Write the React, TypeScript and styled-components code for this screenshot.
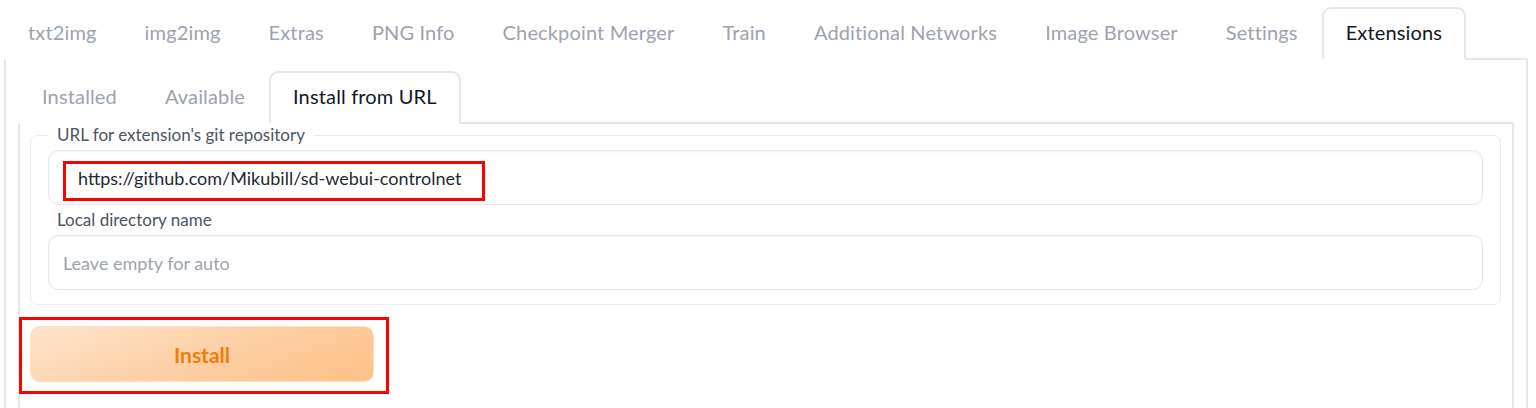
import React from "react";
import styled, { createGlobalStyle } from "styled-components";

const GlobalStyle = createGlobalStyle`
  html, body {
    margin: 0;
    padding: 0;
    background: #ffffff;
  }
  body {
    font-family: "Lato", "Liberation Sans", sans-serif;
    color: #1f2937;
  }
  * { box-sizing: border-box; }
`;

const Page = styled.div`
  width: 1536px;
  height: 408px;
  overflow: hidden;
  padding: 7px 8px 0 4px;
`;

const TabRow = styled.div`
  display: flex;
  align-items: flex-end;
  position: relative;
  z-index: 1;
`;

const Tab = styled.button<{ $active?: boolean }>`
  font-family: "Lato", "Liberation Sans", sans-serif;
  font-size: 20px;
  letter-spacing: 0.15px;
  line-height: 24px;
  height: 53px;
  padding: 0 22px 3px 22px;
  margin-bottom: -2px;
  background: #ffffff;
  border: 2px solid ${(p) => (p.$active ? "#e5e7eb" : "transparent")};
  border-bottom-color: ${(p) => (p.$active ? "#ffffff" : "transparent")};
  border-radius: 9px 9px 0 0;
  color: ${(p) => (p.$active ? "#111827" : "#9ca3af")};
  cursor: pointer;
  white-space: nowrap;
`;

const OuterPanel = styled.div`
  border: 2px solid #e5e7eb;
  border-bottom: none;
  padding: 11px 12px 0 12px;
  height: 360px;
`;

const InnerPanel = styled.div`
  border: 2px solid #e5e7eb;
  border-bottom: none;
  padding: 1px 11px 0 10px;
  height: 300px;
`;

const Group = styled.fieldset`
  margin: 0;
  border: 1px solid #e9ebef;
  border-radius: 8px;
  padding: 5px 17px 14px 17px;
  display: flex;
  flex-direction: column;
`;

const Legend = styled.legend`
  font-size: 17px;
  line-height: 20px;
  color: #4b5563;
  padding: 0 9px;
`;

const FieldLabel = styled.label`
  font-size: 17px;
  line-height: 20px;
  color: #4b5563;
  padding: 5px 9px 5px 9px;
`;

const InputWrap = styled.div`
  position: relative;
`;

const TextInput = styled.input<{ $indent?: number }>`
  display: block;
  width: 100%;
  height: 55px;
  border: 1px solid #e5e7eb;
  border-radius: 10px;
  background: #ffffff;
  box-shadow: inset 0 1px 3px rgba(0, 0, 0, 0.04);
  padding: 0 14px 0 ${(p) => p.$indent ?? 14}px;
  font-family: "Lato", "Liberation Sans", sans-serif;
  font-size: 18px;
  color: #1f2937;
  outline: none;
  &::placeholder {
    color: #9ca3af;
  }
`;

const Highlight = styled.div<{ $t: number; $l: number; $w: number; $h: number; $bw: number }>`
  position: absolute;
  top: ${(p) => p.$t}px;
  left: ${(p) => p.$l}px;
  width: ${(p) => p.$w}px;
  height: ${(p) => p.$h}px;
  border: ${(p) => p.$bw}px solid #ff0000;
  pointer-events: none;
`;

const ButtonWrap = styled.div`
  position: relative;
  margin-top: 21px;
  width: 344px;
`;

const InstallButton = styled.button`
  width: 344px;
  height: 56px;
  border: 1px solid #fde0c2;
  border-radius: 10px;
  background: linear-gradient(160deg, #fee4cc 0%, #fdd0a6 50%, #fdc086 100%);
  box-shadow: 0 1px 2px rgba(0, 0, 0, 0.05);
  color: #f07d0c;
  font-family: "Lato", "Liberation Sans", sans-serif;
  font-size: 21px;
  font-weight: 700;
  cursor: pointer;
`;

const outerTabs = [
  "txt2img",
  "img2img",
  "Extras",
  "PNG Info",
  "Checkpoint Merger",
  "Train",
  "Additional Networks",
  "Image Browser",
  "Settings",
  "Extensions",
];

const innerTabs = ["Installed", "Available", "Install from URL"];

export default function App() {
  return (
    <>
      <GlobalStyle />
      <Page>
        <TabRow>
          {outerTabs.map((t) => (
            <Tab key={t} $active={t === "Extensions"}>
              {t}
            </Tab>
          ))}
        </TabRow>
        <OuterPanel>
          <TabRow>
            {innerTabs.map((t) => (
              <Tab key={t} $active={t === "Install from URL"}>
                {t}
              </Tab>
            ))}
          </TabRow>
          <InnerPanel>
            <Group>
              <Legend>URL for extension's git repository</Legend>
              <InputWrap>
                <TextInput
                  readOnly
                  $indent={29}
                  value="https://github.com/Mikubill/sd-webui-controlnet"
                />
                <Highlight $t={11} $l={15} $w={422} $h={40} $bw={3} />
              </InputWrap>
              <FieldLabel>Local directory name</FieldLabel>
              <TextInput readOnly placeholder="Leave empty for auto" />
            </Group>
            <ButtonWrap>
              <InstallButton>Install</InstallButton>
              <Highlight $t={-9} $l={-11} $w={370} $h={77} $bw={3} />
            </ButtonWrap>
          </InnerPanel>
        </OuterPanel>
      </Page>
    </>
  );
}
